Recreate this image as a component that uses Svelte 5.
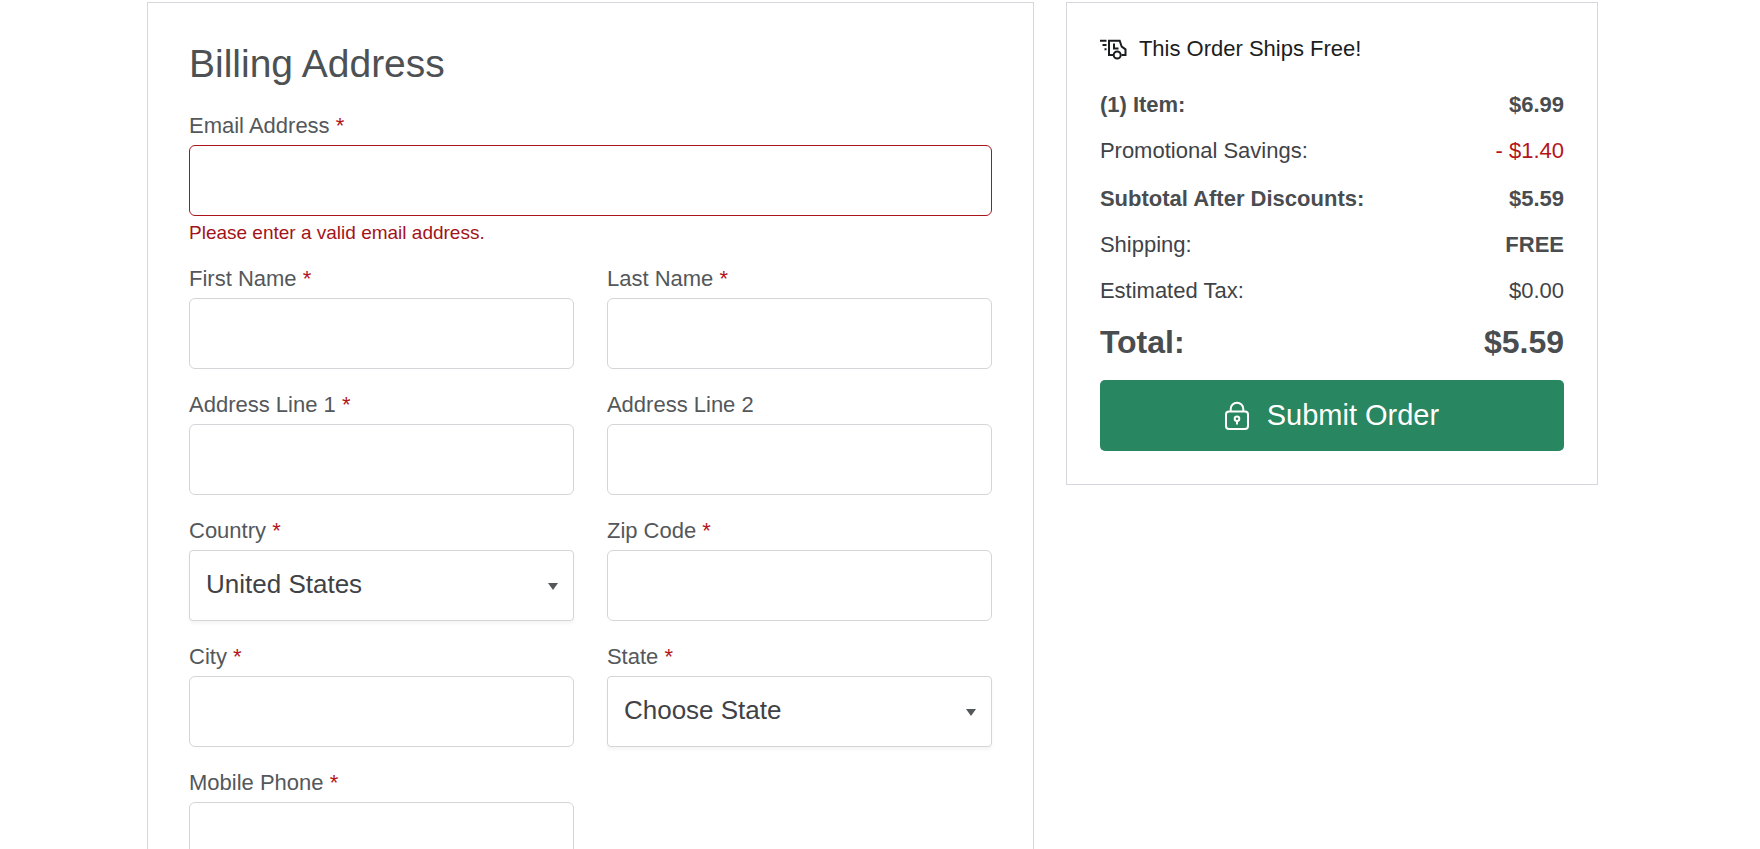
<script>
	const fields = [
		{ id: 'first-name', label: 'First Name', required: true },
		{ id: 'last-name', label: 'Last Name', required: true },
		{ id: 'address-1', label: 'Address Line 1', required: true },
		{ id: 'address-2', label: 'Address Line 2' },
		{ id: 'country', label: 'Country', required: true, options: ['United States', 'Canada'] },
		{ id: 'zip', label: 'Zip Code', required: true },
		{ id: 'city', label: 'City', required: true },
		{ id: 'state', label: 'State', required: true, options: ['Choose State', 'California', 'New York', 'Texas'] },
		{ id: 'phone', label: 'Mobile Phone', required: true, type: 'tel' }
	]

	let email = ''
	let values = { country: 'United States', state: 'Choose State' }

	const rows = [
		{ name: '(1) Item:', price: '$6.99', strong: true },
		{ name: 'Promotional Savings:', price: '- $1.40', savings: true },
		{ name: 'Subtotal After Discounts:', price: '$5.59', strong: true },
		{ name: 'Shipping:', price: 'FREE', strongPrice: true },
		{ name: 'Estimated Tax:', price: '$0.00' }
	]
</script>

<style>
	:global(body) {
		background: #fff;
		color: #3f4347;
		font-family: "Liberation Sans", Arial, sans-serif;
		font-size: 22px;
		line-height: 26px;
	}

	.checkout {
		align-items: start;
		display: grid;
		gap: 32px;
		grid-template-columns: minmax(0, 5fr) minmax(0, 3fr);
		padding: 2px 162px 0 147px;
	}

	.card {
		border: 1px solid #d6d8dd;
	}

	.billing {
		padding: 38px 41px;
	}

	h1 {
		color: #4d5154;
		font-size: 39px;
		font-weight: normal;
		line-height: 46px;
		margin: 0 0 26px;
	}

	.fields {
		display: grid;
		gap: 23px 33px;
		grid-template-columns: repeat(2, minmax(0, 1fr));
	}

	.wide {
		grid-column: 1 / -1;
	}

	label {
		color: #54585b;
		display: block;
		margin-bottom: 6px;
	}

	.required {
		color: #b3151b;
	}

	input,
	select {
		appearance: none;
		background: #fff;
		border: 1px solid #d4d5d9;
		border-radius: 6px;
		box-sizing: border-box;
		color: #3f4246;
		display: block;
		font-family: inherit;
		font-size: 26px;
		height: 71px;
		padding: 0 16px;
		width: 100%;
	}

	.invalid {
		border-color: #a8151c;
	}

	.error {
		color: #a3131a;
		font-size: 19px;
		line-height: 21px;
		margin: 6px 0 0;
	}

	.select {
		position: relative;
	}

	.select select {
		border-radius: 4px;
		box-shadow: 0 3px 3px rgba(0, 0, 0, 0.04);
		padding-bottom: 4px;
	}

	.select:after {
		border: 5px solid transparent;
		border-bottom: 0;
		border-top: 7px solid #54585b;
		content: "";
		pointer-events: none;
		position: absolute;
		right: 16px;
		top: 33px;
	}

	.summary {
		padding: 33px;
	}

	.ships {
		align-items: center;
		color: #1b1d20;
		display: flex;
		gap: 12px;
		margin: 0 0 30px;
	}

	dl {
		margin: 0;
	}

	.row {
		display: flex;
		justify-content: space-between;
		margin-top: 20px;
	}

	.row.strong {
		margin-top: 22px;
	}

	.row:first-child {
		margin-top: 0;
	}

	dd {
		margin: 0;
	}

	.strong {
		color: #4a4d50;
		font-weight: bold;
	}

	.savings {
		color: #b3151b;
	}

	.row.total {
		font-size: 32px;
		line-height: 36px;
		margin-top: 20px;
	}

	button {
		align-items: center;
		background: #288660;
		border: 0;
		border-radius: 5px;
		color: #fff;
		cursor: pointer;
		display: flex;
		font-family: inherit;
		font-size: 29px;
		gap: 18px;
		height: 71px;
		justify-content: center;
		margin-top: 20px;
		padding: 0;
		width: 100%;
	}

	svg {
		fill: none;
		flex: none;
		stroke: currentColor;
		stroke-width: 2;
	}
</style>

<main class="checkout">
	<form class="card billing" id="billing" novalidate>
		<h1>Billing Address</h1>
		<div class="fields">
			<div class="wide">
				<label for="email">Email Address <span class="required">*</span></label>
				<input
					class="invalid"
					id="email"
					type="email"
					aria-invalid="true"
					aria-describedby="email-error"
					bind:value={email}
				>
				<p class="error" id="email-error">Please enter a valid email address.</p>
			</div>
			{#each fields as field}
				<div>
					<label for={field.id}>
						{field.label}
						{#if field.required}<span class="required">*</span>{/if}
					</label>
					{#if field.options}
						<div class="select">
							<select id={field.id} bind:value={values[field.id]}>
								{#each field.options as option}
									<option>{option}</option>
								{/each}
							</select>
						</div>
					{:else}
						<input id={field.id} type={field.type || 'text'}>
					{/if}
				</div>
			{/each}
		</div>
	</form>

	<aside class="card summary">
		<p class="ships">
			<svg width="27" height="21" viewBox="0 0 27 21" aria-hidden="true">
				<path d="M0 1.7h6.5M2.5 6h4M4.5 10.3h2" />
				<path d="M13.2 16H9V1.7h10.7l2 6 3.8 2.6V16h-4" />
				<path d="M14 4.5v5h4.5" />
				<circle cx="17.2" cy="16" r="3.5" />
			</svg>
			This Order Ships Free!
		</p>
		<dl>
			{#each rows as row}
				<div class="row" class:strong={row.strong}>
					<dt>{row.name}</dt>
					<dd class:strong={row.strongPrice} class:savings={row.savings}>{row.price}</dd>
				</div>
			{/each}
			<div class="row strong total">
				<dt>Total:</dt>
				<dd>$5.59</dd>
			</div>
		</dl>
		<button type="submit" form="billing">
			<svg width="24" height="30" viewBox="0 0 24 30" aria-hidden="true">
				<rect x="1" y="10.5" width="22" height="17.5" rx="3" />
				<path d="M5.7 10.5V8a6.3 6.3 0 0 1 12.6 0v2.5" />
				<circle cx="12" cy="17.8" r="2.3" />
				<path d="M12 20v3.6" />
			</svg>
			Submit Order
		</button>
	</aside>
</main>
